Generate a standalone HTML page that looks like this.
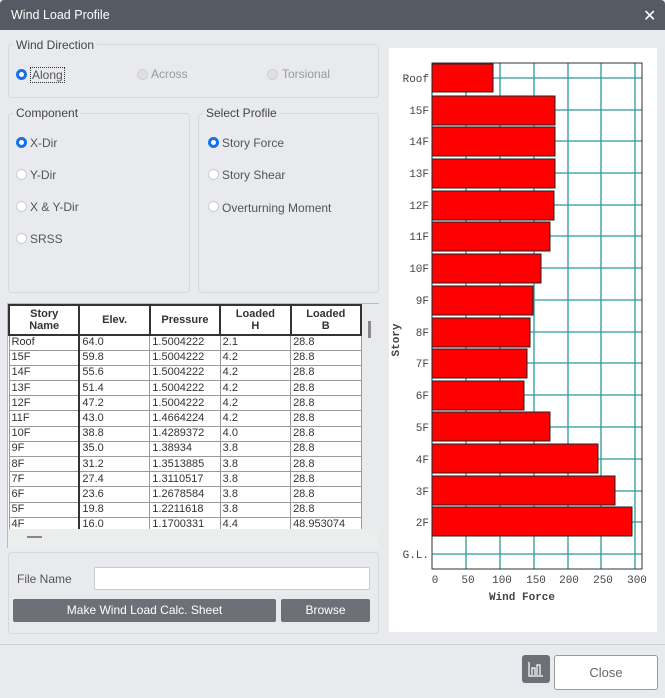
<!DOCTYPE html><html><head><style>
*{box-sizing:border-box;margin:0;padding:0}
body{width:665px;height:698px;background:#e9eaed;font-family:"Liberation Sans",sans-serif;font-size:12px;color:#333;position:relative;overflow:hidden}
.a{position:absolute}
.title{left:0;top:0;width:665px;height:30px;background:#565b63;color:#fff;font-size:12.5px;padding:8px 0 0 11px;border-radius:4px 4px 0 0}
.grp{border:1px solid #d6d8dc;border-radius:4px}
.lg{background:#e9eaed;padding:0 3px;color:#444;font-size:12px}
.r{width:11px;height:11px;border-radius:50%;background:#fff;border:1px solid #ccc}
.r.on{border:3px solid #1a6fe8}
.r.dis{background:#e0e0e0;border-color:#d0d0d0}
.t{font-size:12px;color:#555}
table{border-collapse:collapse;font-size:11px;background:#fff}
td{border:1px solid #999;height:15.2px;padding:0 2px;line-height:13px;color:#333}
th{border:2px solid #333;height:30px;font-size:11px;line-height:12px;background:#fff}
td:first-child{border-right:2px solid #333}
</style></head><body>
<div class="a title">Wind Load Profile</div>
<div class="a" style="left:643px;top:6px;color:#fff;font-size:16px">✕</div>

<div class="a grp" style="left:8px;top:44px;width:371px;height:54px"></div>
<div class="a lg" style="left:13px;top:38px">Wind Direction</div>
<div class="a r on" style="left:16px;top:69px"></div><div class="a t" style="left:30px;top:67px;border:1px dotted #333;padding:0 1px">Along</div>
<div class="a r dis" style="left:137px;top:69px"></div><div class="a t" style="left:151px;top:67px;color:#999">Across</div>
<div class="a r dis" style="left:267px;top:69px"></div><div class="a t" style="left:282px;top:67px;color:#999">Torsional</div>

<div class="a grp" style="left:8px;top:113px;width:182px;height:180px"></div>
<div class="a lg" style="left:13px;top:106px">Component</div>
<div class="a r on" style="left:16px;top:137px"></div><div class="a t" style="left:30px;top:136px">X-Dir</div>
<div class="a r" style="left:16px;top:169px"></div><div class="a t" style="left:30px;top:168px">Y-Dir</div>
<div class="a r" style="left:16px;top:201px"></div><div class="a t" style="left:30px;top:200px">X &amp; Y-Dir</div>
<div class="a r" style="left:16px;top:233px"></div><div class="a t" style="left:30px;top:232px">SRSS</div>

<div class="a grp" style="left:198px;top:113px;width:181px;height:180px"></div>
<div class="a lg" style="left:203px;top:106px">Select Profile</div>
<div class="a r on" style="left:208px;top:137px"></div><div class="a t" style="left:222px;top:136px">Story Force</div>
<div class="a r" style="left:208px;top:169px"></div><div class="a t" style="left:222px;top:168px">Story Shear</div>
<div class="a r" style="left:208px;top:201px"></div><div class="a t" style="left:222px;top:201px">Overturning Moment</div>

<div class="a" style="left:7px;top:303px;width:372px;height:245px;border:1px solid #bbb;border-right:none;border-bottom:none;overflow:hidden">
<table class="a" style="left:0;top:0;width:354px;table-layout:fixed">
<tr><th>Story<br>Name</th><th>Elev.</th><th>Pressure</th><th>Loaded<br>H</th><th>Loaded<br>B</th></tr>
<tr><td>Roof</td><td>64.0</td><td>1.5004222</td><td>2.1</td><td>28.8</td></tr>
<tr><td>15F</td><td>59.8</td><td>1.5004222</td><td>4.2</td><td>28.8</td></tr>
<tr><td>14F</td><td>55.6</td><td>1.5004222</td><td>4.2</td><td>28.8</td></tr>
<tr><td>13F</td><td>51.4</td><td>1.5004222</td><td>4.2</td><td>28.8</td></tr>
<tr><td>12F</td><td>47.2</td><td>1.5004222</td><td>4.2</td><td>28.8</td></tr>
<tr><td>11F</td><td>43.0</td><td>1.4664224</td><td>4.2</td><td>28.8</td></tr>
<tr><td>10F</td><td>38.8</td><td>1.4289372</td><td>4.0</td><td>28.8</td></tr>
<tr><td>9F</td><td>35.0</td><td>1.38934</td><td>3.8</td><td>28.8</td></tr>
<tr><td>8F</td><td>31.2</td><td>1.3513885</td><td>3.8</td><td>28.8</td></tr>
<tr><td>7F</td><td>27.4</td><td>1.3110517</td><td>3.8</td><td>28.8</td></tr>
<tr><td>6F</td><td>23.6</td><td>1.2678584</td><td>3.8</td><td>28.8</td></tr>
<tr><td>5F</td><td>19.8</td><td>1.2211618</td><td>3.8</td><td>28.8</td></tr>
<tr><td>4F</td><td>16.0</td><td>1.1700331</td><td>4.4</td><td>48.953074</td></tr>
</table>
<div class="a" style="left:0;top:225px;width:372px;height:20px;background:#eceded"></div>
<div class="a" style="left:19px;top:232px;width:15px;height:2px;background:#888"></div>
<div class="a" style="left:360px;top:17px;width:3px;height:17px;background:#888"></div>
</div>

<div class="a grp" style="left:8px;top:552px;width:371px;height:82px"></div>
<div class="a t" style="left:17px;top:572px">File Name</div>
<div class="a" style="left:94px;top:567px;width:276px;height:23px;background:#fff;border:1px solid #ccc;border-radius:2px"></div>
<div class="a" style="left:13px;top:599px;width:263px;height:23px;background:#6d7177;color:#fff;text-align:center;line-height:23px;border-radius:2px">Make Wind Load Calc. Sheet</div>
<div class="a" style="left:281px;top:599px;width:89px;height:23px;background:#6d7177;color:#fff;text-align:center;line-height:23px;border-radius:2px">Browse</div>

<svg class="a" style="left:389px;top:48px" width="268" height="584" viewBox="389 48 268 584" font-family="Liberation Mono,monospace" font-size="11" fill="#444">
<rect x="389" y="48" width="268" height="584" fill="#fff"/>
<g stroke="#2a9a98" stroke-width="1.3">
<line x1="466" y1="63" x2="466" y2="569"/><line x1="500" y1="63" x2="500" y2="569"/><line x1="534" y1="63" x2="534" y2="569"/><line x1="568" y1="63" x2="568" y2="569"/><line x1="601" y1="63" x2="601" y2="569"/><line x1="635" y1="63" x2="635" y2="569"/>
<line x1="432" y1="78" x2="642" y2="78"/><line x1="432" y1="110" x2="642" y2="110"/><line x1="432" y1="141" x2="642" y2="141"/><line x1="432" y1="173" x2="642" y2="173"/><line x1="432" y1="205" x2="642" y2="205"/><line x1="432" y1="236" x2="642" y2="236"/><line x1="432" y1="268" x2="642" y2="268"/><line x1="432" y1="300" x2="642" y2="300"/><line x1="432" y1="332" x2="642" y2="332"/><line x1="432" y1="363" x2="642" y2="363"/><line x1="432" y1="395" x2="642" y2="395"/><line x1="432" y1="427" x2="642" y2="427"/><line x1="432" y1="459" x2="642" y2="459"/><line x1="432" y1="491" x2="642" y2="491"/><line x1="432" y1="522" x2="642" y2="522"/><line x1="432" y1="554" x2="642" y2="554"/>
</g>
<rect x="432" y="63" width="210" height="506" fill="none" stroke="#333"/>
<g fill="#ff0000" stroke="#222" stroke-width="1">
<rect x="432" y="64" width="61" height="28"/><rect x="432" y="96" width="123" height="29"/><rect x="432" y="127" width="123" height="29"/><rect x="432" y="159" width="123" height="29"/><rect x="432" y="191" width="122" height="29"/><rect x="432" y="222" width="118" height="29"/><rect x="432" y="254" width="109" height="29"/><rect x="432" y="286" width="101" height="29"/><rect x="432" y="318" width="98" height="29"/><rect x="432" y="349" width="95" height="29"/><rect x="432" y="381" width="92" height="29"/><rect x="432" y="412" width="118" height="29"/><rect x="432" y="444" width="166" height="29"/><rect x="432" y="476" width="183" height="29"/><rect x="432" y="507" width="200" height="29"/>
</g>
<g text-anchor="end">
<text x="429" y="82">Roof</text><text x="429" y="114">15F</text><text x="429" y="145">14F</text><text x="429" y="177">13F</text><text x="429" y="209">12F</text><text x="429" y="240">11F</text><text x="429" y="272">10F</text><text x="429" y="304">9F</text><text x="429" y="336">8F</text><text x="429" y="367">7F</text><text x="429" y="399">6F</text><text x="429" y="431">5F</text><text x="429" y="463">4F</text><text x="429" y="495">3F</text><text x="429" y="526">2F</text><text x="429" y="558">G.L.</text>
</g>
<g text-anchor="middle">
<text x="435" y="583">0</text><text x="468" y="583">50</text><text x="502" y="583">100</text><text x="536" y="583">150</text><text x="569" y="583">200</text><text x="603" y="583">250</text><text x="637" y="583">300</text>
<text x="522" y="600" font-weight="bold">Wind Force</text>
<text transform="translate(399,340) rotate(-90)" font-weight="bold">Story</text>
</g>
</svg>

<div class="a" style="left:0;top:644px;width:665px;height:1px;background:#d0d2d6"></div>
<div class="a" style="left:522px;top:655px;width:28px;height:28px;background:#6d7177;border-radius:3px"></div>
<svg class="a" style="left:522px;top:655px" width="28" height="28" fill="none" stroke="#fff" stroke-width="1.2"><path d="M7 7V21H21M10 20V13H13V20M15 20V10H18V20"/></svg>
<div class="a" style="left:554px;top:655px;width:104px;height:35px;background:#fff;border:1px solid #999;border-radius:3px;text-align:center;line-height:33px;font-size:13px;color:#666">Close</div>
</body></html>
